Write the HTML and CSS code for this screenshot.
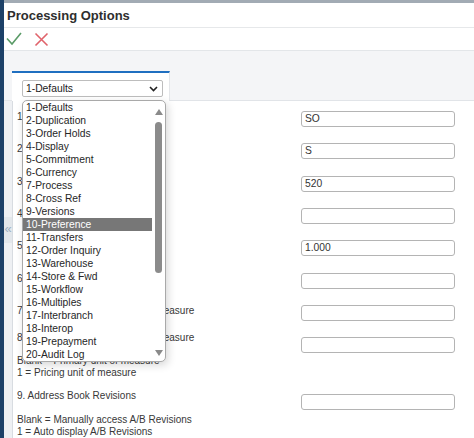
FILE: index.html
```html
<!DOCTYPE html>
<html>
<head>
<meta charset="utf-8">
<link rel="stylesheet" href="styles.css">
</head>
<body>
<div class="app">
  <div class="leftbar"></div>
  <div class="main">
    <div class="titlebar"><span class="title">Processing Options</span></div>
    <div class="toolbar">
      <svg class="ok" width="16" height="14" viewBox="0 0 16 14"><polyline points="1,6.5 6,12 15,1" fill="none" stroke="#5a9b67" stroke-width="1.6"/></svg>
      <svg class="cancel" width="15" height="15" viewBox="0 0 15 15"><path d="M1.5 1.5 L13.5 13.5 M13.5 1.5 L1.5 13.5" fill="none" stroke="#e0636b" stroke-width="1.6"/></svg>
    </div>
    <div class="band">
      <div class="tab">
        <div class="select"><span>1-Defaults</span>
          <svg class="chev" width="9" height="6" viewBox="0 0 9 6"><polyline points="1,1 4.5,4.5 8,1" fill="none" stroke="#222" stroke-width="1.6"/></svg>
        </div>
      </div>
    </div>
    <div class="body">
      <div class="side"><div class="collapse">&laquo;</div></div>
      <div class="content">
        <div class="row"><div class="label">1. Order Type</div><div class="input">SO</div></div>
        <div class="row"><div class="label">2. Line Type</div><div class="input">S</div></div>
        <div class="row"><div class="label">3. Beginning Status</div><div class="input">520</div></div>
        <div class="row"><div class="label">4. Override Next Status</div><div class="input"></div></div>
        <div class="row"><div class="label">5. Line Number Increment</div><div class="input">1.000</div></div>
        <div class="row"><div class="label">6. Reason Code</div><div class="input"></div></div>
        <div class="row"><div class="label">7. Override Transaction Unit of Measure</div><div class="input"></div></div>
        <div class="row multi"><div class="label"><div>8. Default Sales Pricing Unit of Measure</div><div class="desc">Blank = Primary unit of measure<br>1 = Pricing unit of measure</div></div><div class="input low5"></div></div>
        <div class="row multi"><div class="label"><div>9. Address Book Revisions</div><div class="desc">Blank = Manually access A/B Revisions<br>1 = Auto display A/B Revisions</div></div><div class="input low4"></div></div>
      </div>
    </div>
  </div>
  <div class="dropdown">
    <div class="items">
      <div class="item">1-Defaults</div>
      <div class="item">2-Duplication</div>
      <div class="item">3-Order Holds</div>
      <div class="item">4-Display</div>
      <div class="item">5-Commitment</div>
      <div class="item">6-Currency</div>
      <div class="item">7-Process</div>
      <div class="item">8-Cross Ref</div>
      <div class="item">9-Versions</div>
      <div class="item sel">10-Preference</div>
      <div class="item">11-Transfers</div>
      <div class="item">12-Order Inquiry</div>
      <div class="item">13-Warehouse</div>
      <div class="item">14-Store &amp; Fwd</div>
      <div class="item">15-Workflow</div>
      <div class="item">16-Multiples</div>
      <div class="item">17-Interbranch</div>
      <div class="item">18-Interop</div>
      <div class="item">19-Prepayment</div>
      <div class="item">20-Audit Log</div>
    </div>
    <div class="scroll">
      <svg width="8" height="6" viewBox="0 0 8 6" class="arr"><polygon points="0,6 4,0 8,6" fill="#8a8a8a"/></svg>
      <div class="thumb"></div>
      <div class="track"></div>
      <svg width="8" height="6" viewBox="0 0 8 6" class="arr"><polygon points="0,0 8,0 4,6" fill="#8a8a8a"/></svg>
    </div>
  </div>
</div>
</body>
</html>
```
FILE: styles.css
```css
html, body {
  margin: 0;
  padding: 0;
  background: #ffffff;
}
body {
  width: 474px;
  height: 438px;
  overflow: hidden;
  font-family: "Liberation Sans", Arial, sans-serif;
  color: #333;
}
.app {
  position: relative;
  display: flex;
  height: 438px;
}
.leftbar {
  width: 4px;
  flex: none;
  background: #1d4168;
}
.main {
  flex: 1;
  display: flex;
  flex-direction: column;
  border-top: 3px solid #a2abb4;
}
.titlebar {
  height: 24px;
  border-bottom: 1px solid #e6e8ea;
  display: flex;
  align-items: center;
  padding-left: 3px;
}
.title {
  font-weight: bold;
  font-size: 13px;
  color: #2e2e2e;
}
.toolbar {
  height: 22px;
  border-bottom: 1px solid #e3e6e9;
  display: flex;
  align-items: center;
  padding-left: 2px;
  gap: 12px;
}
.band {
  height: 49px;
  background: #f4f5f7;
  border-bottom: 1px solid #e1e4e8;
  padding-left: 8px;
  display: flex;
  align-items: flex-end;
}
.tab {
  width: 158px;
  height: 30px;
  margin-bottom: -1px;
  background: #ffffff;
  border-top: 2px solid #1f6fc0;
  border-right: 1px solid #e4e6e9;
  padding: 7px 0 0 10px;
  box-sizing: border-box;
}
.select {
  width: 141px;
  height: 17px;
  box-sizing: border-box;
  border: 1px solid #bdbdbd;
  border-radius: 2px;
  display: flex;
  align-items: center;
  justify-content: space-between;
  padding: 0 4px 0 3px;
  font-size: 10.3px;
  color: #222;
}
.body {
  flex: 1;
  display: flex;
}
.side {
  width: 8px;
  flex: none;
  background: #eef0f3;
  border-right: 1px solid #d8dce1;
  padding-top: 116px;
}
.collapse {
  height: 26px;
  background: #e3e7eb;
  color: #9db0c3;
  font-size: 13px;
  line-height: 24px;
  text-align: center;
}
.content {
  flex: 1;
  padding: 10px 19px 0 4px;
  display: flex;
  flex-direction: column;
  gap: 16.33px;
}
.row {
  display: flex;
  align-items: flex-start;
}
.row.multi {
  margin-top: -5.33px;
}
.label {
  flex: 1;
  font-size: 10px;
  line-height: 12px;
  color: #383838;
  white-space: nowrap;
}
.desc {
  margin-top: 11.5px;
}
.input {
  width: 154px;
  height: 16px;
  flex: none;
  box-sizing: border-box;
  border: 1px solid #b4b4b4;
  border-radius: 3px;
  font-size: 10.3px;
  line-height: 14px;
  padding-left: 3px;
  color: #333;
  background: #fff;
}
.input.low5 { margin-top: 5px; }
.input.low4 { margin-top: 4px; }
.dropdown {
  position: absolute;
  left: 22px;
  top: 100px;
  width: 144px;
  height: 262px;
  box-sizing: border-box;
  background: #ffffff;
  border: 1px solid #a9a9a9;
  border-radius: 5px;
  box-shadow: 2px 3px 9px rgba(0, 0, 0, 0.16);
  display: flex;
  overflow: hidden;
}
.items {
  flex: 1;
}
.item {
  height: 13px;
  line-height: 13px;
  font-size: 10.3px;
  color: #262626;
  padding-left: 3px;
  white-space: nowrap;
}
.item.sel {
  background: #777777;
  color: #ffffff;
}
.scroll {
  width: 13px;
  flex: none;
  display: flex;
  flex-direction: column;
  align-items: center;
  padding: 8px 0 5px;
  box-sizing: border-box;
}
.arr { flex: none; }
.thumb {
  width: 7px;
  height: 151px;
  margin-top: 7px;
  border-radius: 3.5px;
  background: #8b8b8b;
}
.track { flex: 1; }
```
